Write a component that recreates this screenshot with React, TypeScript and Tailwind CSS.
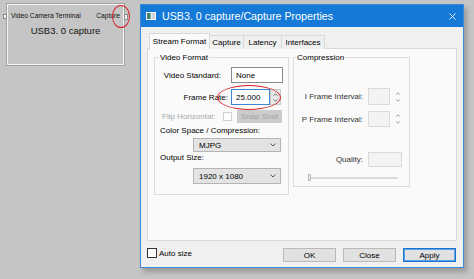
import { type ReactNode } from "react";

// Small chevron used by spinners and combo boxes.
function Chevron({ up = false, className = "" }: { up?: boolean; className?: string }) {
  return (
    <svg viewBox="0 0 6 4" className={className} aria-hidden>
      <path
        d={up ? "M0.5 3.5 L3 1 L5.5 3.5" : "M0.5 0.5 L3 3 L5.5 0.5"}
        fill="none"
        stroke="currentColor"
        strokeWidth="1"
      />
    </svg>
  );
}

function FilterNode() {
  return (
    <div className="absolute left-[7px] top-[4px] h-[61px] w-[117px] border border-[#f4f4f4] outline outline-1 outline-[#a2a2a2]">
      <span className="absolute -left-[5px] top-[9px] h-[5px] w-[4px] border border-[#8c8c8c] bg-[#f4f4f4]" />
      <span className="absolute -right-[5px] top-[9px] h-[6px] w-[4px] border border-[#8c8c8c] bg-[#f4f4f4]" />
      <div className="flex justify-between px-[3px] pt-[7px] text-[6.7px] leading-[8px] text-[#111]">
        <span>Video Camera Terminal</span>
        <span>Capture</span>
      </div>
      <div className="mt-[5px] text-center text-[9.5px] leading-[11px] text-[#111]">
        USB3. 0 capture
      </div>
    </div>
  );
}

function Combo({ value, h }: { value: string; h: string }) {
  return (
    <div
      className={`ml-[38px] flex w-[88px] items-center justify-between border border-[#b4b4b4] bg-[#e3e3e3] pl-[5px] pr-[4px] ${h}`}
    >
      <span>{value}</span>
      <Chevron className="h-[4px] w-[6px] text-[#555]" />
    </div>
  );
}

function MiniSpin() {
  return (
    <div className="flex w-[6px] flex-col items-center gap-[4px] text-[#666]">
      <Chevron up className="h-[3px] w-[4px]" />
      <Chevron className="h-[3px] w-[4px]" />
    </div>
  );
}

function Button({ children, primary = false }: { children: ReactNode; primary?: boolean }) {
  return (
    <div
      className={`flex h-[14px] w-[53px] items-center justify-center bg-[#e1e1e1] ${
        primary
          ? "border border-[#1a73cc] shadow-[inset_0_0_0_1px_#5aa0e6]"
          : "border border-[#b9b9b9]"
      }`}
    >
      {children}
    </div>
  );
}

function VideoFormat() {
  return (
    <fieldset className="h-[142px] w-[135px] shrink-0 border border-[#dcdcdc]">
      <legend className="ml-[4px] px-[1px] leading-[9px]">Video Format</legend>
      <div className="flex flex-col">
        <div className="mt-[5px] flex items-center gap-[3px]">
          <span className="w-[73px] pr-[7px] text-right">Video Standard:</span>
          <div className="flex h-[16px] w-[52px] items-center border border-[#8a8a8a] bg-white pl-[4px]">
            None
          </div>
        </div>
        <div className="mt-[6px] flex items-center gap-[3px]">
          <span className="w-[73px] text-right">Frame Rate:</span>
          <div className="flex h-[16px] w-[39px] items-center border border-[#3f86d2] bg-white pl-[4px]">
            25.000
          </div>
          <div className="-ml-[3px] flex h-[16px] w-[11px] flex-col items-center justify-center gap-[3px] border border-[#c8c8c8] bg-[#e8e8e8] text-[#444]">
            <Chevron up className="h-[3px] w-[5px]" />
            <Chevron className="h-[3px] w-[5px]" />
          </div>
        </div>
        <div className="mt-[5px] flex h-[13px] items-center">
          <span className="ml-[7px] text-[#a8a8a8]">Flip Horizontal:</span>
          <span className="ml-auto h-[9px] w-[9px] border border-[#cfcfcf] bg-white" />
          <div className="ml-[5px] mr-[6px] flex h-[13px] w-[45px] items-center justify-center bg-[#cccccc] text-[#a3a3a3]">
            Snap Shot
          </div>
        </div>
        <span className="mt-[3px] pl-[5px] leading-[10px]">Color Space / Compression:</span>
        <div className="mt-[2px]">
          <Combo value="MJPG" h="h-[14px]" />
        </div>
        <span className="mt-[1px] pl-[5px] leading-[10px]">Output Size:</span>
        <div className="mt-[5px]">
          <Combo value="1920 x 1080" h="h-[16px]" />
        </div>
      </div>
    </fieldset>
  );
}

function Compression() {
  return (
    <fieldset className="h-[134px] w-[117px] shrink-0 border border-[#dcdcdc]">
      <legend className="ml-[2px] px-[1px] leading-[9px]">Compression</legend>
      <div className="flex flex-col">
        <div className="mt-[26px] flex items-center gap-[5px]">
          <span className="w-[69px] text-right text-[#333]">I Frame Interval:</span>
          <div className="h-[17px] w-[22px] border border-[#dadada] bg-[#f3f3f3]" />
          <MiniSpin />
        </div>
        <div className="mt-[6px] flex items-center gap-[5px]">
          <span className="w-[69px] text-right text-[#333]">P Frame Interval:</span>
          <div className="h-[16px] w-[22px] border border-[#dadada] bg-[#f3f3f3]" />
          <MiniSpin />
        </div>
        <div className="mt-[25px] flex items-center gap-[5px]">
          <span className="w-[69px] text-right text-[#333]">Quality:</span>
          <div className="h-[15px] w-[34px] border border-[#dadada] bg-[#f3f3f3]" />
        </div>
        <div className="relative ml-[14px] mt-[7px] flex h-[7px] w-[90px] items-center">
          <div className="h-[2px] w-full border border-[#dcdcdc] bg-[#e6e6e6]" />
          <span className="absolute left-0 top-0 h-[7px] w-[3px] border border-[#bdbdbd] bg-[#e9e9e9]" />
        </div>
      </div>
    </fieldset>
  );
}

function PropertiesDialog() {
  const tabs = [
    { label: "Stream Format", w: "w-[61px]", active: true },
    { label: "Capture", w: "w-[35px]" },
    { label: "Latency", w: "w-[39px]" },
    { label: "Interfaces", w: "w-[44px]" },
  ];

  return (
    <div className="absolute left-[140px] top-[4px] flex h-[264px] w-[324px] flex-col border border-[#3d8ad6] bg-[#f0f0f0] shadow-[3px_4px_5px_rgba(0,0,0,0.22)]">
      <div className="flex h-[22px] shrink-0 items-center bg-[#1479d7] pl-[5px] pr-[7px] text-white">
        <svg viewBox="0 0 10 8" className="h-[8px] w-[10px]" aria-hidden>
          <rect x="0" y="0" width="10" height="8" fill="#f4f4f4" />
          <rect x="1" y="1" width="3.5" height="6" fill="#3f7f6c" />
          <rect x="5.5" y="1" width="3.5" height="6" fill="#c9d6e2" />
        </svg>
        <span className="ml-[6px] text-[10.7px] leading-[12px]">USB3. 0 capture/Capture Properties</span>
        <svg viewBox="0 0 8 8" className="ml-auto h-[7px] w-[7px]" aria-hidden>
          <path d="M0.5 0.5 L7.5 7.5 M7.5 0.5 L0.5 7.5" stroke="white" strokeWidth="1" />
        </svg>
      </div>

      <div className="flex flex-1 flex-col px-[6px] pb-[5px] pt-[6px] text-[8px] leading-[9px]">
        <div className="relative z-10 ml-[2px] flex h-[15px] items-end">
          {tabs.map((t) => (
            <div
              key={t.label}
              className={`-mb-px flex items-center justify-center border border-b-0 border-[#d9d9d9] ${t.w} ${
                t.active ? "h-[16px] bg-[#fafafa]" : "-ml-px h-[14px] bg-[#f0f0f0]"
              }`}
            >
              {t.label}
            </div>
          ))}
        </div>

        <div className="flex h-[193px] shrink-0 gap-[4px] border border-[#d9d9d9] bg-[#fafafa] pl-[6px] pt-[4px]">
          <VideoFormat />
          <Compression />
        </div>

        <div className="mt-[7px] flex h-[14px] items-center">
          <span className="-mt-[4px] h-[10px] w-[10px] border border-[#333] bg-white" />
          <span className="-mt-[4px] ml-[2px]">Auto size</span>
          <div className="ml-auto flex gap-[7px] pr-[1px]">
            <Button>OK</Button>
            <Button>Close</Button>
            <Button primary>Apply</Button>
          </div>
        </div>
      </div>
    </div>
  );
}

export default function App() {
  return (
    <div className="relative h-[279px] w-[474px] overflow-hidden bg-[#c5c5c5] font-['Liberation_Sans',Arial,sans-serif] text-black">
      <FilterNode />
      <PropertiesDialog />
      {/* red annotation rings drawn over the screenshot */}
      <span className="pointer-events-none absolute left-[112px] top-[5px] h-[23px] w-[18px] rounded-[50%] border-[1.5px] border-[#d8232a]" />
      <span className="pointer-events-none absolute left-[217px] top-[85px] h-[25px] w-[64px] rounded-[50%] border-[1.5px] border-[#d8232a]" />
    </div>
  );
}
